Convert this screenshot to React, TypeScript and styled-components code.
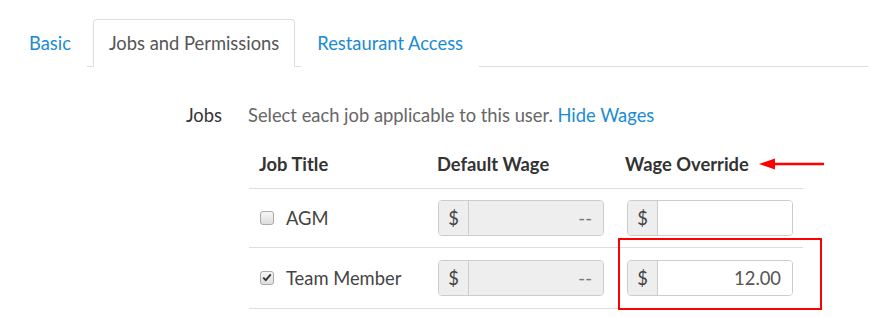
import React from "react";
import styled, { createGlobalStyle } from "styled-components";

const Global = createGlobalStyle`
  html, body { margin: 0; padding: 0; background: #fff; }
  body { font-family: Lato, "Open Sans", Arial, sans-serif; font-size: 18.35px; color: #333; }
  * { box-sizing: border-box; }
`;

const Page = styled.div`
  position: relative;
  width: 870px;
  height: 317px;
  overflow: hidden;
`;

const Tabs = styled.ul`
  list-style: none;
  margin: 0 2px 0 13px;
  padding: 19px 0 0 0;
  display: flex;
  border-bottom: 1px solid #ddd;
`;

const Tab = styled.li<{ $active?: boolean }>`
  margin-right: 6px;
  margin-bottom: -1px;
  height: 48px;
  padding: 0 15px;
  display: flex;
  align-items: center;
  border: 1px solid ${(p) => (p.$active ? "#ddd" : "transparent")};
  border-bottom-color: ${(p) => (p.$active ? "#fff" : "transparent")};
  border-radius: 4px 4px 0 0;
  background: #fff;
  color: ${(p) => (p.$active ? "#555" : "#1a8bd2")};
  cursor: pointer;
`;

const FormRow = styled.div`
  display: flex;
  margin-top: 36px;
`;

const Label = styled.div`
  width: 222px;
  text-align: right;
  color: #333;
  line-height: 24px;
`;

const Controls = styled.div`
  margin-left: 26px;
  display: flex;
  flex-direction: column;
`;

const Help = styled.div`
  color: #666;
  line-height: 24px;
`;

const Link = styled.a`
  color: #1a8bd2;
  text-decoration: none;
`;

const Table = styled.table`
  margin-top: 13px;
  margin-left: 1px;
  width: 554px;
  border-collapse: collapse;
  table-layout: fixed;
`;

const Th = styled.th<{ $w: number }>`
  width: ${(p) => p.$w}px;
  text-align: left;
  font-weight: 700;
  color: #333;
  padding: 0 10px;
  height: 48px;
  vertical-align: middle;
  border-bottom: 1px solid #ddd;
`;

const Row = styled.tr<{ $h: number }>`
  height: ${(p) => p.$h}px;
`;

const Td = styled.td`
  padding: 0 10px;
  vertical-align: middle;
  border-bottom: 1px solid #ddd;
`;

const CheckLabel = styled.label`
  display: flex;
  align-items: center;
  gap: 12px;
  color: #444;
  padding-left: 1px;
`;

const Box = styled.span`
  width: 14px;
  height: 14px;
  border: 1px solid #aaa;
  border-radius: 3px;
  background: linear-gradient(#f6f6f6, #dedede);
  display: inline-flex;
  align-items: center;
  justify-content: center;
`;

const Group = styled.div<{ $shift?: number }>`
  display: flex;
  width: 166px;
  height: 36px;
  margin-left: ${(p) => p.$shift ?? 1}px;
  border: 1px solid #ccc;
  border-radius: 4px;
  overflow: hidden;
`;

const Addon = styled.span`
  width: 30px;
  flex: none;
  background: #eee;
  border-right: 1px solid #ccc;
  display: flex;
  align-items: center;
  justify-content: center;
  color: #444;
`;

const Field = styled.span<{ $disabled?: boolean }>`
  flex: 1;
  background: ${(p) => (p.$disabled ? "#eee" : "#fff")};
  display: flex;
  align-items: center;
  justify-content: flex-end;
  padding-right: 11px;
  color: ${(p) => (p.$disabled ? "#777" : "#555")};
`;

const Highlight = styled.div`
  position: absolute;
  left: 618px;
  top: 238px;
  width: 204px;
  height: 72px;
  border: 2px solid #f00;
  pointer-events: none;
`;

const Arrow = styled.svg`
  position: absolute;
  left: 758px;
  top: 157px;
`;

const Check = () => (
  <svg width="10" height="9" viewBox="0 0 10 9">
    <path d="M1.2 4.6 L3.8 7.2 L8.8 1.4" stroke="#333" strokeWidth="1.9" fill="none" />
  </svg>
);

const rows = [
  { name: "AGM", checked: false, override: "", h: 59 },
  { name: "Team Member", checked: true, override: "12.00", h: 61 },
];

export default function App() {
  return (
    <Page>
      <Global />
      <Tabs>
        <Tab>Basic</Tab>
        <Tab $active>Jobs and Permissions</Tab>
        <Tab>Restaurant Access</Tab>
      </Tabs>
      <FormRow>
        <Label>Jobs</Label>
        <Controls>
          <Help>
            Select each job applicable to this user. <Link href="#">Hide Wages</Link>
          </Help>
          <Table>
            <thead>
              <tr>
                <Th $w={178}>Job Title</Th>
                <Th $w={188}>Default Wage</Th>
                <Th $w={188}>Wage Override</Th>
              </tr>
            </thead>
            <tbody>
              {rows.map((r) => (
                <Row key={r.name} $h={r.h}>
                  <Td>
                    <CheckLabel>
                      <Box>{r.checked && <Check />}</Box>
                      {r.name}
                    </CheckLabel>
                  </Td>
                  <Td>
                    <Group>
                      <Addon>$</Addon>
                      <Field $disabled>--</Field>
                    </Group>
                  </Td>
                  <Td>
                    <Group $shift={2}>
                      <Addon>$</Addon>
                      <Field>{r.override}</Field>
                    </Group>
                  </Td>
                </Row>
              ))}
            </tbody>
          </Table>
        </Controls>
      </FormRow>
      <Highlight />
      <Arrow width="70" height="14" viewBox="0 0 70 14">
        <line x1="14" y1="7" x2="66" y2="7" stroke="#f00" strokeWidth="2.5" />
        <polygon points="1,7 17,1.5 17,12.5" fill="#f00" />
      </Arrow>
    </Page>
  );
}
